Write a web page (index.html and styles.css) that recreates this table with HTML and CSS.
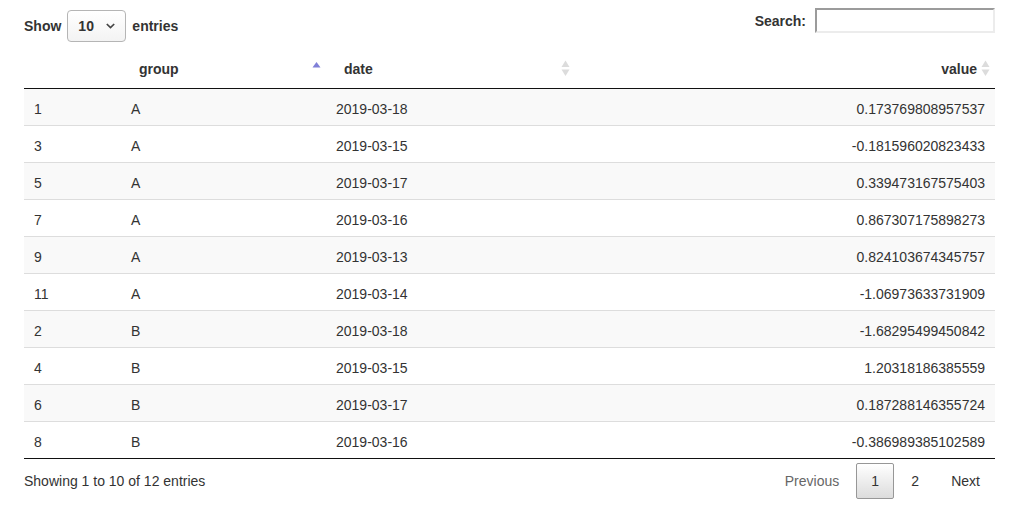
FILE: index.html
```html
<!DOCTYPE html>
<html>
<head>
<meta charset="utf-8">
<link rel="stylesheet" href="styles.css">
</head>
<body>
<div class="wrapper">
  <div class="top">
    <div class="length">
      <span>Show</span>
      <div class="select">
        <span>10</span>
        <svg class="chev" width="9" height="6" viewBox="0 0 9 6"><path d="M0.8 1 L4.5 4.6 L8.2 1" fill="none" stroke="#444" stroke-width="1.7"/></svg>
      </div>
      <span>entries</span>
    </div>
    <div class="filter">
      <span>Search:</span>
      <input type="search" class="search">
    </div>
  </div>
  <table class="dt">
    <colgroup>
      <col class="c1"><col class="c2"><col class="c3"><col class="c4">
    </colgroup>
    <thead>
      <tr>
        <th></th>
        <th class="sortable">group<svg class="sort" width="19" height="19" viewBox="0 0 19 19"><polygon points="5.5,8.5 9.5,3 13.5,8.5" fill="#8080d8"/></svg></th>
        <th class="sortable">date<svg class="sort" width="19" height="19" viewBox="0 0 19 19"><polygon points="5.5,8 9.5,1.5 13.5,8" fill="#dcdcdc"/><polygon points="5.5,10.5 9.5,17 13.5,10.5" fill="#dcdcdc"/></svg></th>
        <th class="sortable num">value<svg class="sort" width="19" height="19" viewBox="0 0 19 19"><polygon points="5.5,8 9.5,1.5 13.5,8" fill="#dcdcdc"/><polygon points="5.5,10.5 9.5,17 13.5,10.5" fill="#dcdcdc"/></svg></th>
      </tr>
    </thead>
    <tbody>
      <tr><td>1</td><td>A</td><td>2019-03-18</td><td class="num">0.173769808957537</td></tr>
      <tr><td>3</td><td>A</td><td>2019-03-15</td><td class="num">-0.181596020823433</td></tr>
      <tr><td>5</td><td>A</td><td>2019-03-17</td><td class="num">0.339473167575403</td></tr>
      <tr><td>7</td><td>A</td><td>2019-03-16</td><td class="num">0.867307175898273</td></tr>
      <tr><td>9</td><td>A</td><td>2019-03-13</td><td class="num">0.824103674345757</td></tr>
      <tr><td>11</td><td>A</td><td>2019-03-14</td><td class="num">-1.06973633731909</td></tr>
      <tr><td>2</td><td>B</td><td>2019-03-18</td><td class="num">-1.68295499450842</td></tr>
      <tr><td>4</td><td>B</td><td>2019-03-15</td><td class="num">1.20318186385559</td></tr>
      <tr><td>6</td><td>B</td><td>2019-03-17</td><td class="num">0.187288146355724</td></tr>
      <tr><td>8</td><td>B</td><td>2019-03-16</td><td class="num">-0.386989385102589</td></tr>
    </tbody>
  </table>
  <div class="bottom">
    <div class="info">Showing 1 to 10 of 12 entries</div>
    <div class="paginate">
      <span class="pbtn disabled">Previous</span>
      <span class="pbtn current">1</span>
      <span class="pbtn">2</span>
      <span class="pbtn">Next</span>
    </div>
  </div>
</div>
</body>
</html>
```

FILE: styles.css
```css
html, body {
  margin: 0;
  padding: 0;
  background: #fff;
}
body {
  font-family: "Liberation Sans", Arial, Helvetica, sans-serif;
  font-size: 14px;
  line-height: 20px;
  color: #333;
}
.wrapper {
  padding: 8px 24px 0 24px;
}
.top {
  display: flex;
  justify-content: space-between;
  align-items: flex-start;
  height: 40px;
}
.length {
  display: flex;
  align-items: center;
  gap: 6px;
  font-weight: bold;
  margin-top: 2px;
}
.select {
  display: flex;
  align-items: center;
  justify-content: space-between;
  box-sizing: border-box;
  width: 59px;
  height: 32px;
  padding: 0 10px 0 10px;
  border: 1px solid #b5b5b5;
  border-radius: 4px;
  background: linear-gradient(#ffffff, #f3f3f3);
  font-weight: bold;
}
.chev {
  display: block;
}
.filter {
  display: flex;
  align-items: center;
  gap: 9px;
  font-weight: bold;
}
.search {
  box-sizing: border-box;
  width: 180px;
  height: 25px;
  margin: 0;
  padding: 1px 4px;
  border-style: solid;
  border-width: 2px;
  border-color: #9b9b9b #ececec #ececec #9b9b9b;
  border-radius: 0;
  background: #fff;
  font: inherit;
  outline: none;
}
.dt {
  width: 100%;
  border-collapse: separate;
  border-spacing: 0;
  table-layout: fixed;
}
.c1 { width: 97px; }
.c2 { width: 205px; }
.c3 { width: 249px; }
.c4 { width: 420px; }
.dt th {
  position: relative;
  text-align: left;
  font-weight: bold;
  padding: 11px 18px 9px 18px;
  border-bottom: 1px solid #111;
  white-space: nowrap;
}
.dt th.num {
  text-align: right;
}
.sort {
  position: absolute;
  right: 0;
  top: 11px;
  display: block;
}
.dt td {
  padding: 10px 10px 6px 10px;
  border-top: 1px solid #ddd;
  white-space: nowrap;
}
.dt tbody tr:first-child td {
  border-top: none;
}
.dt tbody tr:last-child td {
  border-bottom: 1px solid #111;
}
.dt tbody tr:nth-child(odd) {
  background: #f9f9f9;
}
.dt td.num {
  text-align: right;
}
.bottom {
  display: flex;
  justify-content: space-between;
  align-items: center;
  padding-top: 4px;
}
.info {
  color: #333;
}
.paginate {
  display: flex;
}
.pbtn {
  display: block;
  margin-left: 2px;
  padding: 7px 14px;
  border: 1px solid transparent;
  border-radius: 2px;
  color: #333;
  min-width: 8px;
  text-align: center;
}
.pbtn.disabled {
  color: #666;
}
.pbtn.current {
  border: 1px solid #979797;
  background: linear-gradient(#ffffff, #dcdcdc);
}
```
